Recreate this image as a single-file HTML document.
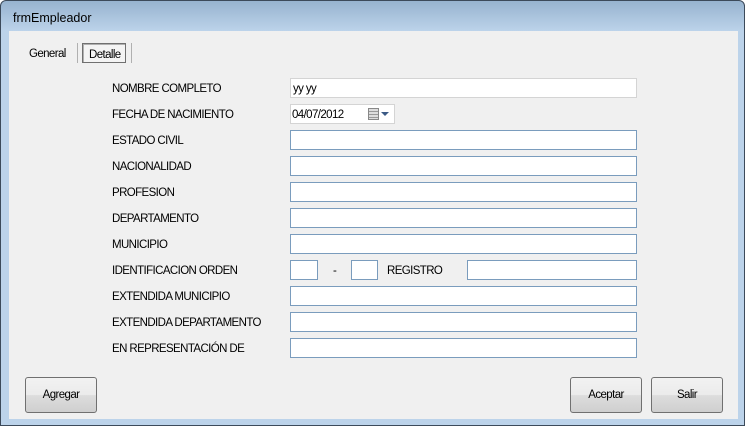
<!DOCTYPE html>
<html><head><style>
body{margin:0;width:745px;height:426px;overflow:hidden;font-family:"Liberation Sans",sans-serif;font-size:12px;background:#fff}
.win{position:absolute;left:0;top:0;width:743px;height:424px;border:1px solid #3c4a5a;border-radius:6px 6px 0 0;background:linear-gradient(#97b3cf 0,#bcd3ea 30px,#bcd3ea);}
.title{position:absolute;left:12px;top:10px;font-size:12.5px;color:#000}
.client{position:absolute;left:8px;top:30px;width:729px;height:388px;background:#f0f0f0}
.t{position:absolute;color:#000;font-size:11.5px;letter-spacing:-0.6px;margin-top:2px}
.f{position:absolute;height:18px;background:#fff;border:1px solid #7a9cbd}
.btn{position:absolute;width:70px;height:34px;border:1px solid #707070;border-radius:3px;background:linear-gradient(#f2f2f2 0,#ebebeb 50%,#dddddd 51%,#cfcfcf);text-align:center;line-height:34px;font-size:11.5px;letter-spacing:-0.6px}
</style></head><body>
<div class="win">
<div class="title">frmEmpleador</div>
<div class="client">
<div class="t" style="left:20px;top:15px">General</div>
<div style="position:absolute;left:68px;top:12px;width:1px;height:20px;background:#b0b0b0"></div>
<div style="position:absolute;left:122px;top:12px;width:1px;height:20px;background:#b0b0b0"></div>
<div style="position:absolute;left:73px;top:12px;width:42px;height:18px;border:1px solid #707070;box-shadow:inset 1px 1px 0 #b0b0b0;background:#f4f4f4"></div>
<div class="t" style="left:80px;top:16px">Detalle</div>
</div>
</div>
<div class="t" style="left:112px;top:81px">NOMBRE COMPLETO</div>
<div class="t" style="left:112px;top:107px">FECHA DE NACIMIENTO</div>
<div class="t" style="left:112px;top:133px">ESTADO CIVIL</div>
<div class="t" style="left:112px;top:159px">NACIONALIDAD</div>
<div class="t" style="left:112px;top:185px">PROFESION</div>
<div class="t" style="left:112px;top:211px">DEPARTAMENTO</div>
<div class="t" style="left:112px;top:237px">MUNICIPIO</div>
<div class="t" style="left:112px;top:263px">IDENTIFICACION ORDEN</div>
<div class="t" style="left:112px;top:289px">EXTENDIDA MUNICIPIO</div>
<div class="t" style="left:112px;top:315px">EXTENDIDA DEPARTAMENTO</div>
<div class="t" style="left:112px;top:341px">EN REPRESENTACIÓN DE</div>
<div class="f" style="left:290px;top:78px;width:345px;border-color:#d4d4d4"></div>
<div class="t" style="left:293px;top:81px">yy yy</div>
<div class="f" style="left:290px;top:104px;width:103px;border-color:#d4d4d4"></div>
<div class="t" style="left:292px;top:107px">04/07/2012</div>
<div style="position:absolute;left:368px;top:108px;width:9px;height:10px;border:1px solid #888;background:repeating-linear-gradient(#ddd 0 2px,#999 2px 3px)"></div>
<div style="position:absolute;left:381px;top:112px;border:4px solid transparent;border-top:4px solid #3b5a85"></div>
<div class="f" style="left:290px;top:130px;width:345px"></div>
<div class="f" style="left:290px;top:156px;width:345px"></div>
<div class="f" style="left:290px;top:182px;width:345px"></div>
<div class="f" style="left:290px;top:208px;width:345px"></div>
<div class="f" style="left:290px;top:234px;width:345px"></div>
<div class="f" style="left:290px;top:260px;width:26px"></div>
<div class="t" style="left:333px;top:263px">-</div>
<div class="f" style="left:351px;top:260px;width:25px"></div>
<div class="t" style="left:387px;top:263px">REGISTRO</div>
<div class="f" style="left:467px;top:260px;width:168px"></div>
<div class="f" style="left:290px;top:286px;width:345px"></div>
<div class="f" style="left:290px;top:312px;width:345px"></div>
<div class="f" style="left:290px;top:338px;width:345px"></div>
<div class="btn" style="left:25px;top:377px">Agregar</div>
<div class="btn" style="left:570px;top:377px">Aceptar</div>
<div class="btn" style="left:651px;top:377px">Salir</div>
</body></html>
